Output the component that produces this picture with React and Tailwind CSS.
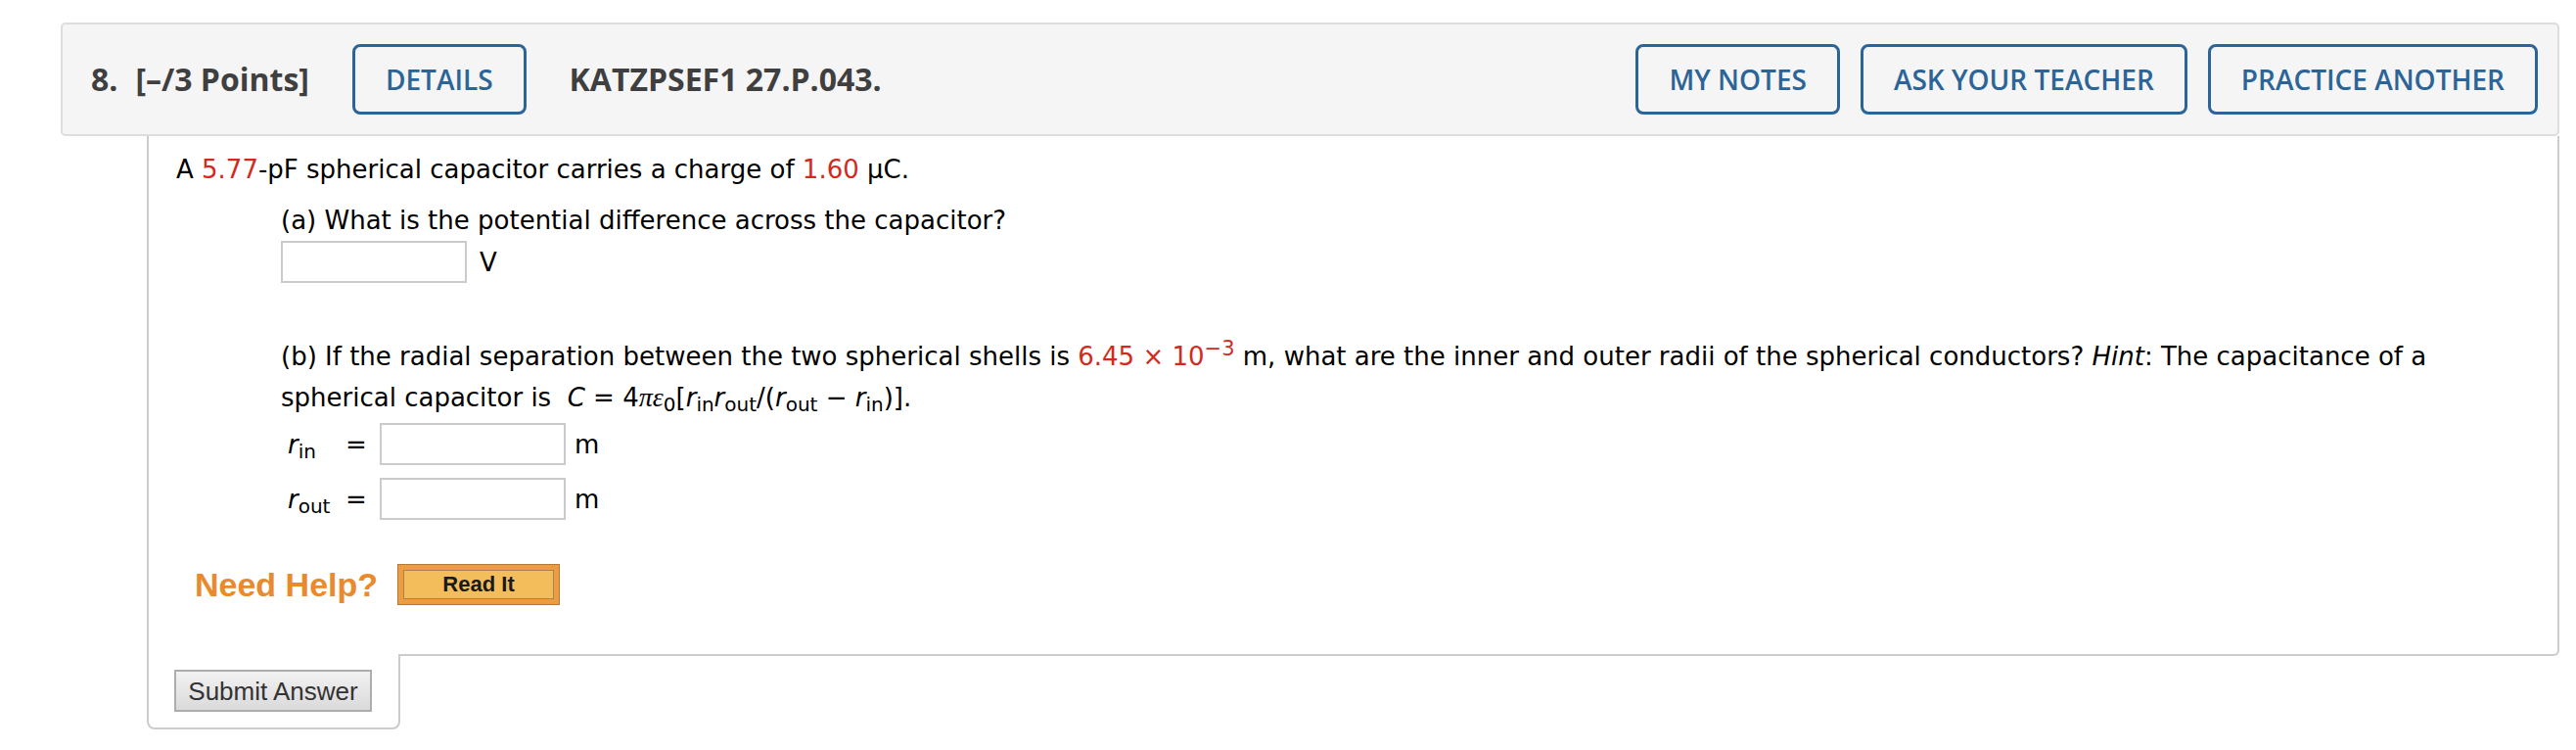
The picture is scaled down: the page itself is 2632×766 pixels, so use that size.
import React from "react";

const red = "text-[#d22a1c]";

const HeaderButton = ({ children }) => (
  <button className="h-[72px] px-[31px] border-[3px] border-[#2c6497] rounded-[8px] text-[28px] font-semibold text-[#2c6497] leading-none">
    {children}
  </button>
);

const AnswerBox = () => (
  <div className="w-[190px] h-[43px] border-2 border-[#cbcbcb] bg-white" />
);

const Sym = ({ children }) => <i className="italic">{children}</i>;

export default function App() {
  return (
    <div className="w-[2632px] h-[766px] bg-white pt-[23px] pl-[62px]">
      <div className="w-[2553px]">
        {/* question header */}
        <div className="h-[116px] flex items-center pl-[29px] pr-[20px] bg-[#f5f5f5] border-2 border-[#dddddd] rounded-[5px] font-['Open_Sans',sans-serif] text-[#3f3f3f]">
          <span className="text-[32px] font-bold">8.</span>
          <span className="text-[32px] font-bold ml-[18px]">[–/3 Points]</span>
          <div className="ml-[44px]">
            <HeaderButton>DETAILS</HeaderButton>
          </div>
          <span className="text-[32px] font-bold ml-[44px]">KATZPSEF1 27.P.043.</span>
          <div className="flex-1" />
          <div className="flex gap-[21px]">
            <HeaderButton>MY NOTES</HeaderButton>
            <HeaderButton>ASK YOUR TEACHER</HeaderButton>
            <HeaderButton>PRACTICE ANOTHER</HeaderButton>
          </div>
        </div>

        {/* question body */}
        <div className="ml-[88px] border-2 border-t-0 border-[#cccccc] rounded-br-[6px] pl-[28px] pt-[13px] pb-[50px] font-['DejaVu_Sans',sans-serif] text-[26px] leading-[42px] text-black">
          <p>
            A <span className={red}>5.77</span>-pF spherical capacitor carries a charge of{" "}
            <span className={red}>1.60</span> μC.
          </p>

          <div className="pl-[107px]">
            <p className="mt-[10px]">(a) What is the potential difference across the capacitor?</p>
            <div className="flex items-center gap-[13px]">
              <AnswerBox />
              <span>V</span>
            </div>

            <p className="mt-[54px]">
              (b) If the radial separation between the two spherical shells is{" "}
              <span className={red}>
                6.45 × 10<sup className="text-[21px]">−3</sup>
              </span>{" "}
              m, what are the inner and outer radii of the spherical conductors? <Sym>Hint</Sym>: The
              capacitance of a
              <br />
              spherical capacitor is&nbsp; <Sym>C</Sym> = 4
              <span className="font-['Liberation_Serif',serif] italic text-[28px]">πε</span>
              <sub className="text-[20px]">0</sub>[<Sym>r</Sym>
              <sub className="text-[20px]">in</sub>
              <Sym>r</Sym>
              <sub className="text-[20px]">out</sub>/(<Sym>r</Sym>
              <sub className="text-[20px]">out</sub> − <Sym>r</Sym>
              <sub className="text-[20px]">in</sub>)].
            </p>

            <div className="mt-[5px] flex flex-col gap-[13px]">
              <div className="flex items-center">
                <span className="w-[66px] pl-[7px]">
                  <Sym>r</Sym>
                  <sub className="text-[20px]">in</sub>
                </span>
                <span className="w-[35px]">=</span>
                <AnswerBox />
                <span className="ml-[9px]">m</span>
              </div>
              <div className="flex items-center">
                <span className="w-[66px] pl-[7px]">
                  <Sym>r</Sym>
                  <sub className="text-[20px]">out</sub>
                </span>
                <span className="w-[35px]">=</span>
                <AnswerBox />
                <span className="ml-[9px]">m</span>
              </div>
            </div>
          </div>

          {/* help links */}
          <div className="mt-[45px] ml-[19px] flex items-center gap-[20px] font-['Liberation_Sans',Arial,sans-serif]">
            <span className="text-[34px] font-bold text-[#e98a2d] leading-none">Need Help?</span>
            <div className="w-[166px] h-[42px] p-[5px] bg-[#ec9d43] border border-[#b57a3a]">
              <div className="h-full flex items-center justify-center bg-[#f3bd5c] border border-[#a9834c] text-[22px] font-bold text-[#1a1a1a] leading-none">
                Read It
              </div>
            </div>
          </div>
        </div>

        {/* submit tab */}
        <div className="ml-[88px] -mt-[2px] w-[259px] bg-white border-2 border-t-0 border-[#cccccc] rounded-b-[8px] pl-[26px] pt-[16px] pb-[16px]">
          <button className="w-[202px] h-[43px] border-2 border-[#adadad] bg-gradient-to-b from-[#f2f2f2] to-[#dadada] font-['Liberation_Sans',Arial,sans-serif] text-[26px] text-[#333333] leading-none">
            Submit Answer
          </button>
        </div>
      </div>
    </div>
  );
}
